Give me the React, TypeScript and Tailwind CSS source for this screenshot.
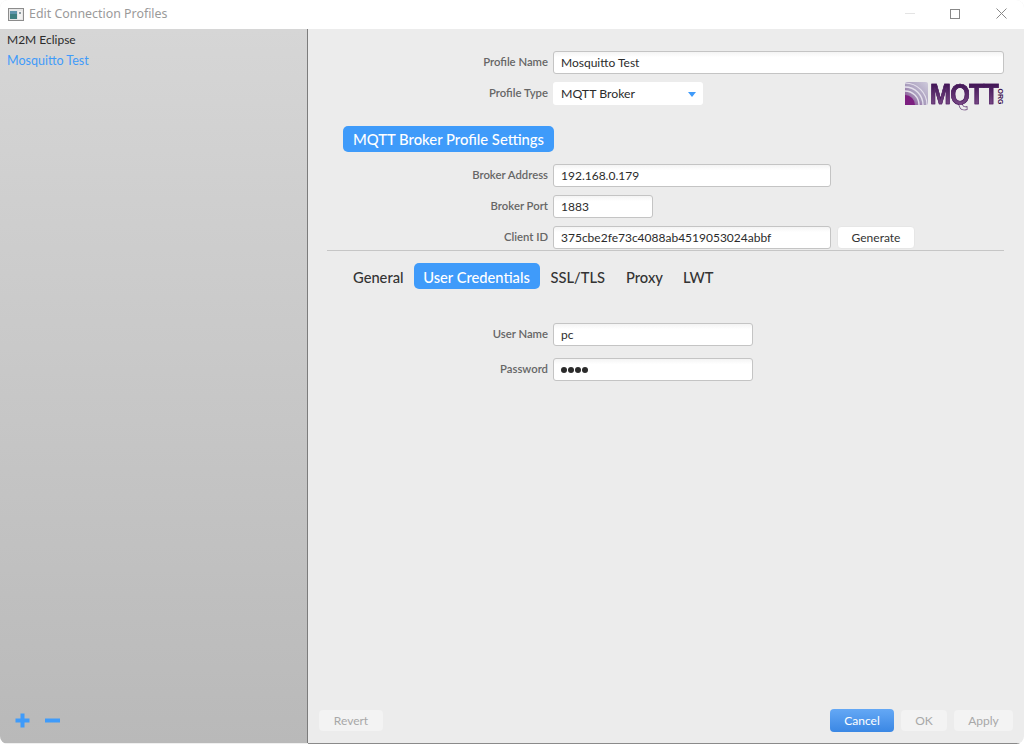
import React from 'react';

const inputClass =
  'h-[23px] rounded-[3px] border border-[#c4c4c4] bg-gradient-to-b from-[#f4f4f4] to-white to-[25%] pl-[7px] flex items-center text-[12px] text-[#2b2b2b]';

const Row: React.FC<{ label: string; className?: string; children: React.ReactNode }> = ({ label, className, children }) => (
  <div className={`flex items-center ${className ?? ''}`}>
    <div className="w-[245px] pr-[5px] text-right text-[11.3px] font-semibold text-[#666666] leading-none -mt-[2px]">{label}</div>
    {children}
  </div>
);

const MqttLogo = () => (
  <div className="ml-auto flex h-[23px] w-[99px] items-center">
    <svg width="23" height="23" viewBox="0 0 23 23" className="shrink-0">
      <defs>
        <linearGradient id="tile" x1="1" y1="0" x2="0" y2="1">
          <stop offset="0" stopColor="#cfcbdc" />
          <stop offset="0.55" stopColor="#a89cbc" />
          <stop offset="1" stopColor="#7a2a80" />
        </linearGradient>
      </defs>
      <rect width="23" height="23" rx="2" fill="url(#tile)" />
      <path d="M0 13 A10 10 0 0 1 10 23 L0 23 Z" fill="#7d1f80" />
      <path d="M0 9 A14 14 0 0 1 14 23" fill="none" stroke="#e4e0ec" strokeWidth="1.4" />
      <path d="M0 5 A18 18 0 0 1 18 23" fill="none" stroke="#e4e0ec" strokeWidth="1.4" />
      <path d="M0 1 A22 22 0 0 1 22 23" fill="none" stroke="#e4e0ec" strokeWidth="1.2" />
    </svg>
    <div className="ml-[2px] h-[23px] w-[68px] shrink-0">
      <span className="inline-block w-[82px] origin-left scale-x-[0.84] whitespace-nowrap bg-gradient-to-b from-[#3c0f50] to-[#7a4a86] bg-clip-text text-[30px] font-bold leading-[23px] tracking-[-1px] text-transparent [-webkit-text-stroke:0.7px_#4a1a60] [font-family:'Liberation_Sans',sans-serif]">
        MQTT
      </span>
    </div>
    <div className="flex h-[23px] w-[6px] shrink-0 items-center justify-center">
      <span className="rotate-90 whitespace-nowrap pl-[6px] text-[7px] font-bold leading-none text-[#3c0f50] [font-family:'Liberation_Sans',sans-serif]">ORG</span>
    </div>
  </div>
);

const Tab: React.FC<{ label: string; active?: boolean; className?: string }> = ({ label, active, className }) => (
  <div
    className={`flex h-[26px] items-center rounded-[5px] pt-[2px] text-[14.7px] font-medium ${
      active ? 'bg-[#3f9bfa] w-[126px] justify-center text-white' : 'text-[#333333]'
    } ${className ?? ''}`}
  >
    {label}
  </div>
);

export default function App() {
  return (
    <div className="relative flex h-[744px] w-[1024px] flex-col overflow-hidden rounded-[8px] bg-[#ececec] [font-family:Lato,sans-serif]">
      {/* Title bar */}
      <div className="flex h-[29px] shrink-0 items-center bg-white">
        <svg width="16" height="13" viewBox="0 0 16 13" className="ml-[8px]">
          <rect x="0.5" y="0.5" width="15" height="12" fill="#e6e6e6" stroke="#8c8c8c" />
          <rect x="2" y="3" width="7" height="8" fill="#3f7f80" />
          <rect x="2" y="3" width="7" height="3" fill="#5f94ab" />
          <rect x="10" y="3" width="4" height="8" fill="#f2f2f2" />
          <rect x="11" y="4" width="2" height="2" fill="#8c9aa0" />
        </svg>
        <span className="ml-[5px] text-[12.4px] text-[#9a9a9a] [font-family:'Noto_Sans',sans-serif]">Edit Connection Profiles</span>
        <div className="ml-auto flex items-center -mt-[2px]">
          <div className="h-px w-[10px] bg-[#e4e4e4]" />
          <div className="ml-[35px] h-[10px] w-[10px] border border-[#888888]" />
          <svg width="11" height="11" viewBox="0 0 11 11" className="ml-[36px] mr-[17px]">
            <path d="M0.5 0.5 L10.5 10.5 M10.5 0.5 L0.5 10.5" stroke="#888888" strokeWidth="1" />
          </svg>
        </div>
      </div>

      <div className="flex min-h-0 flex-1">
        {/* Profile list */}
        <div className="flex w-[308px] shrink-0 flex-col border-r border-[#7c7c7c] bg-gradient-to-b from-[#d6d6d6] to-[#b9b9b9]">
          <div className="mt-px flex h-[20px] items-center pl-[7px] text-[12px] text-[#2b2b2b]">M2M Eclipse</div>
          <div className="mt-px flex h-[20px] items-center pl-[7px] text-[12.5px] text-[#3f9bfa]">Mosquitto Test</div>
          <div className="mt-auto mb-[15px] ml-[15px] flex items-center">
            <svg width="15" height="15" viewBox="0 0 15 15">
              <path d="M7.5 0.5 V14.5 M0.5 7.5 H14.5" stroke="#3f9bfa" strokeWidth="4" />
            </svg>
            <svg width="15" height="15" viewBox="0 0 15 15" className="ml-[15px]">
              <path d="M0 7.5 H15" stroke="#3f9bfa" strokeWidth="4" />
            </svg>
          </div>
        </div>

        {/* Profile form */}
        <div className="flex min-w-0 flex-1 flex-col">
          <div className="pt-[22px] pr-[20px]">
            <Row label="Profile Name">
              <div className={`${inputClass} w-[451px] text-[12.5px]`}>Mosquitto Test</div>
            </Row>
            <Row label="Profile Type" className="mt-[8px]">
              <div className="flex h-[23px] w-[150px] items-center rounded-[3px] bg-white pl-[8px] pt-px text-[12.3px] text-[#2b2b2b]">
                MQTT Broker
                <div className="ml-auto mr-[7px] h-0 w-0 border-x-[4px] border-t-[5px] border-x-transparent border-t-[#3f9bfa]" />
              </div>
              <MqttLogo />
            </Row>
            <div className="ml-[35px] mt-[21px] flex h-[26px] w-[211px] items-center justify-center rounded-[5px] bg-[#3f9bfa] pt-px text-[14.8px] font-medium text-white">
              MQTT Broker Profile Settings
            </div>
            <Row label="Broker Address" className="mt-[12px]">
              <div className={`${inputClass} w-[278px]`}>192.168.0.179</div>
            </Row>
            <Row label="Broker Port" className="mt-[8px]">
              <div className={`${inputClass} w-[100px]`}>1883</div>
            </Row>
            <Row label="Client ID" className="mt-[8px]">
              <div className={`${inputClass} w-[278px]`}>375cbe2fe73c4088ab4519053024abbf</div>
              <div className="ml-[6px] flex h-[23px] w-[78px] items-center justify-center rounded-[4px] border border-[#e6e6e6] bg-white text-[12px] text-[#333333]">
                Generate
              </div>
            </Row>
            <div className="ml-[19px] mt-px h-px bg-[#c6c6c6]" />
            <div className="ml-[45px] mt-[12px] flex items-center">
              <Tab label="General" />
              <Tab label="User Credentials" active className="ml-[10px]" />
              <Tab label="SSL/TLS" className="ml-[11px]" />
              <Tab label="Proxy" className="ml-[21px]" />
              <Tab label="LWT" className="ml-[20px]" />
            </div>
            <Row label="User Name" className="mt-[34px]">
              <div className={`${inputClass} w-[200px]`}>pc</div>
            </Row>
            <Row label="Password" className="mt-[12px]">
              <div className={`${inputClass} w-[200px] gap-[1px]`}>
                <span className="h-[6px] w-[6px] rounded-full bg-[#2b2b2b]" />
                <span className="h-[6px] w-[6px] rounded-full bg-[#2b2b2b]" />
                <span className="h-[6px] w-[6px] rounded-full bg-[#2b2b2b]" />
                <span className="h-[6px] w-[6px] rounded-full bg-[#2b2b2b]" />
              </div>
            </Row>
          </div>

          {/* Dialog buttons */}
          <div className="mt-auto mb-[11px] flex items-center pl-[11px] pr-[11px] text-[12px]">
            <div className="flex h-[21px] w-[64px] items-center justify-center rounded-[4px] bg-[#f3f3f3] text-[#a8a8a8]">Revert</div>
            <div className="ml-auto flex h-[23px] w-[64px] items-center justify-center rounded-[4px] bg-gradient-to-b from-[#64a8f5] to-[#3a87e4] text-white">Cancel</div>
            <div className="ml-[7px] flex h-[21px] w-[46px] items-center justify-center rounded-[4px] bg-[#f3f3f3] text-[#a8a8a8]">OK</div>
            <div className="ml-[7px] flex h-[21px] w-[59px] items-center justify-center rounded-[4px] bg-[#f3f3f3] text-[#a8a8a8]">Apply</div>
          </div>
        </div>
      </div>
      <div className="flex h-px shrink-0">
        <div className="w-[308px] bg-[#efefef]" />
        <div className="flex-1 bg-[#8a8a8a]" />
      </div>
    </div>
  );
}
